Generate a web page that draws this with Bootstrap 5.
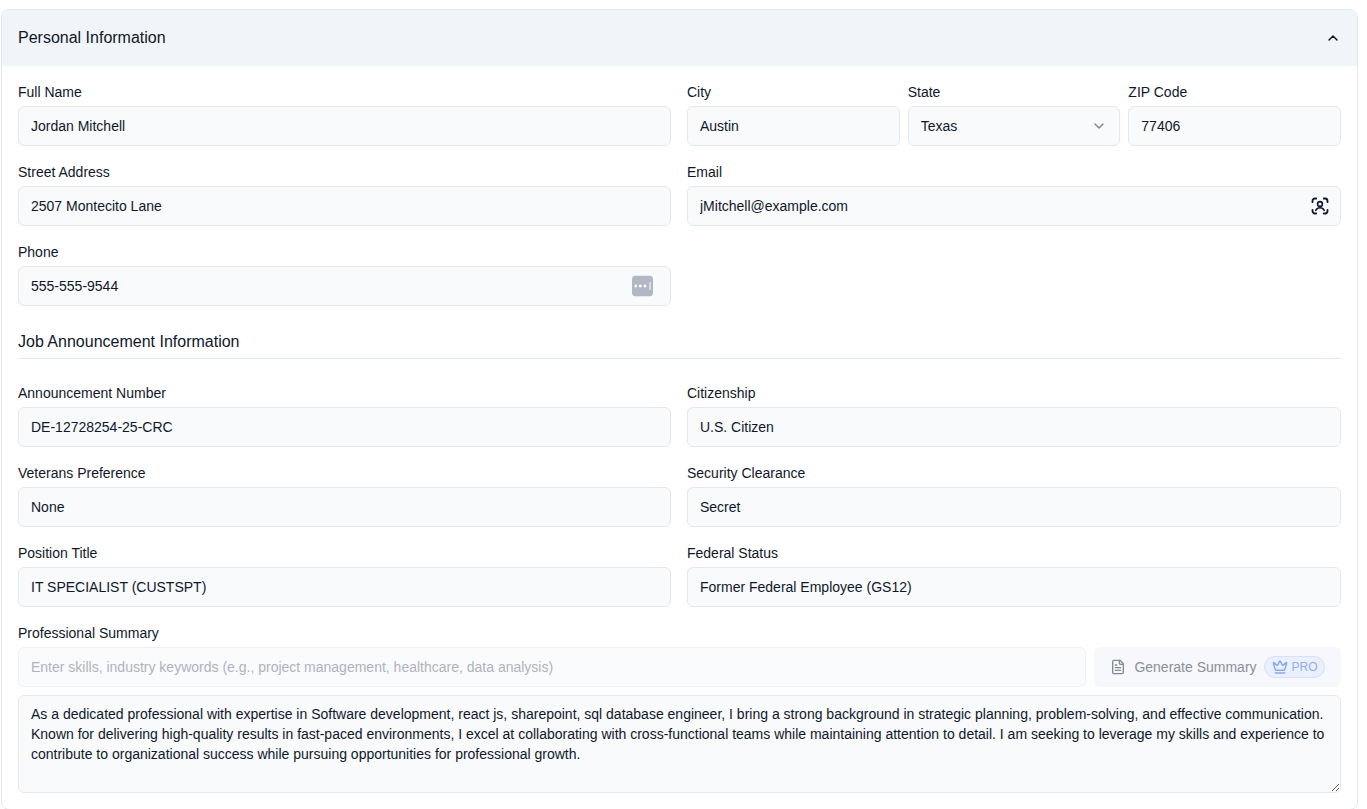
<!DOCTYPE html>
<html lang="en">
<head>
<meta charset="utf-8">
<title>Personal Information</title>
<link href="https://cdn.jsdelivr.net/npm/bootstrap@5.3.0/dist/css/bootstrap.min.css" rel="stylesheet">
<style>
html, body { height: 100%; overflow: hidden; }
body { font-family: "Liberation Sans", Arial, sans-serif; font-size: 14px; color: #0f172a; background: #fff; }
.page-wrap { padding: 9px 9px 0 1px; }
.info-card { border: 1px solid #e2e8f0; border-radius: 8px; background: #fff; }
.info-head { height: 56px; padding: 0 16px; background: #f1f5f9; border: 0; border-radius: 7px 7px 0 0; font-size: 16px; line-height: 24px; }
.info-head svg { width: 16px; height: 16px; }
.info-body { padding: 16px; }
.grid-main { display: grid; grid-template-columns: 653px 1fr; column-gap: 16px; row-gap: 16px; }
.grid-addr { display: grid; grid-template-columns: 1fr 1fr 1fr; column-gap: 8px; }
.fld-label { display: block; font-size: 14px; line-height: 20px; margin-bottom: 4px; color: #0f172a; }
.fld-input { height: 40px; padding: 8px 12px; font-size: 14px; line-height: 20px; color: #0f172a; background-color: #f8fafc; border: 1px solid #e2e8f0; border-radius: 6px; }
.fld-input::placeholder { color: #78808e; opacity: 1; }
.fld-wrap { position: relative; }
.fld-select { appearance: none; }
.fld-icon { position: absolute; top: 50%; transform: translateY(-50%); pointer-events: none; }
.chev-ico { right: 13px; width: 16px; height: 16px; }
.scan-ico { right: 11px; width: 20px; height: 20px; }
.dots-ico { right: 18px; width: 21px; height: 21px; }
.section-title { font-size: 16px; line-height: 24px; font-weight: 400; margin: 24px 0 24px; padding-bottom: 4px; border-bottom: 1px solid #e2e8f0; color: #0f172a; }
.muted-input { opacity: .6; background-color: #f8fafc; }
.muted-input.fld-input { border-color: #e2e8f0; }
.gen-btn { width: 247px; flex: 0 0 247px; height: 40px; padding: 0; gap: 8px; font-size: 14px; line-height: 20px; color: #8a8f99; background: #f6f8fb; border: 0; border-radius: 6px; }
.gen-btn:disabled { color: #8a8f99; background: #f6f8fb; opacity: 1; border: 0; }
.pro-pill { display: inline-flex; align-items: center; gap: 4px; height: 22px; margin-left: -1px; padding: 0 6px 0 7px; font-size: 12px; color: #93aef0; background: #eaf0fd; border: 1px solid #d5e1fa; border-radius: 11px; }
.fld-area { height: 98px; margin-top: 8px; resize: vertical; padding: 8px 12px; }
.fld-area.fld-input { height: 98px; }
</style>
</head>
<body>
<div class="page-wrap">
  <div class="card info-card">
    <div class="card-header info-head d-flex align-items-center justify-content-between">
      <span>Personal Information</span>
      <svg viewBox="0 0 24 24" fill="none" stroke="#0f172a" stroke-width="2.2" stroke-linecap="round" stroke-linejoin="round"><path d="m18 15-6-6-6 6"/></svg>
    </div>
    <div class="card-body info-body">
      <div class="grid-main">
        <div>
          <label class="fld-label" for="f1">Full Name</label>
          <input class="form-control fld-input" id="f1" value="Jordan Mitchell">
        </div>
        <div class="grid-addr">
          <div>
            <label class="fld-label" for="f2">City</label>
            <input class="form-control fld-input" id="f2" value="Austin">
          </div>
          <div>
            <label class="fld-label" for="f3">State</label>
            <div class="fld-wrap">
              <select class="form-control fld-input fld-select" id="f3"><option>Texas</option></select>
              <svg class="fld-icon chev-ico" viewBox="0 0 24 24" fill="none" stroke="#7b828e" stroke-width="2" stroke-linecap="round" stroke-linejoin="round"><path d="m6 9 6 6 6-6"/></svg>
            </div>
          </div>
          <div>
            <label class="fld-label" for="f4">ZIP Code</label>
            <input class="form-control fld-input" id="f4" value="77406">
          </div>
        </div>
        <div>
          <label class="fld-label" for="f5">Street Address</label>
          <input class="form-control fld-input" id="f5" value="2507 Montecito Lane">
        </div>
        <div>
          <label class="fld-label" for="f6">Email</label>
          <div class="fld-wrap">
            <input class="form-control fld-input" id="f6" value="jMitchell@example.com">
            <svg class="fld-icon scan-ico" viewBox="0 0 20 20" fill="none" stroke="#0f172a" stroke-width="1.800" stroke-linecap="round" stroke-linejoin="round"><path d="M2.500 6.200V5a2.500 2.500 0 0 1 2.500-2.500h1.200"/><path d="M13.800 2.500H15A2.500 2.500 0 0 1 17.500 5v1.200"/><path d="M17.500 13.800V15a2.500 2.500 0 0 1-2.500 2.500h-1.200"/><path d="M6.200 17.500H5A2.500 2.500 0 0 1 2.500 15v-1.200"/><circle cx="10" cy="8" r="2.400" stroke-width="1.600"/><path d="M5.800 14.400c.8-1.700 2.300-2.600 4.200-2.600s3.400.9 4.200 2.600" stroke-width="1.600"/></svg>
          </div>
        </div>
        <div>
          <label class="fld-label" for="f7">Phone</label>
          <div class="fld-wrap">
            <input class="form-control fld-input" id="f7" value="555-555-9544">
            <svg class="fld-icon dots-ico" viewBox="0 0 21 21"><rect width="21" height="21" rx="4" fill="#b1b8c4"/><circle cx="3.700" cy="10.500" r="1.400" fill="#fff"/><circle cx="8.300" cy="10.500" r="1.400" fill="#fff"/><circle cx="13" cy="10.500" r="1.400" fill="#fff"/><rect x="17.500" y="6.500" width="1" height="8" fill="#fff"/></svg>
          </div>
        </div>
      </div>
      <h2 class="section-title">Job Announcement Information</h2>
      <div class="grid-main">
        <div>
          <label class="fld-label" for="j1">Announcement Number</label>
          <input class="form-control fld-input" id="j1" value="DE-12728254-25-CRC">
        </div>
        <div>
          <label class="fld-label" for="j2">Citizenship</label>
          <input class="form-control fld-input" id="j2" value="U.S. Citizen">
        </div>
        <div>
          <label class="fld-label" for="j3">Veterans Preference</label>
          <input class="form-control fld-input" id="j3" value="None">
        </div>
        <div>
          <label class="fld-label" for="j4">Security Clearance</label>
          <input class="form-control fld-input" id="j4" value="Secret">
        </div>
        <div>
          <label class="fld-label" for="j5">Position Title</label>
          <input class="form-control fld-input" id="j5" value="IT SPECIALIST (CUSTSPT)">
        </div>
        <div>
          <label class="fld-label" for="j6">Federal Status</label>
          <input class="form-control fld-input" id="j6" value="Former Federal Employee (GS12)">
        </div>
      </div>
      <div class="mt-3">
        <label class="fld-label" for="s1">Professional Summary</label>
        <div class="d-flex gap-2">
          <input class="form-control fld-input muted-input" id="s1" placeholder="Enter skills, industry keywords (e.g., project management, healthcare, data analysis)">
          <button type="button" class="btn gen-btn d-inline-flex align-items-center justify-content-center" disabled>
            <svg width="16" height="16" viewBox="0 0 24 24" fill="none" stroke="#838893" stroke-width="2" stroke-linecap="round" stroke-linejoin="round"><path d="M15 2H6a2 2 0 0 0-2 2v16a2 2 0 0 0 2 2h12a2 2 0 0 0 2-2V7Z"/><path d="M14 2v4a2 2 0 0 0 2 2h4"/><path d="M10 9H8"/><path d="M16 13H8"/><path d="M16 17H8"/></svg>
            <span>Generate Summary</span>
            <span class="pro-pill"><svg width="16" height="16" viewBox="0 0 24 24" fill="none" stroke="#8aa7ee" stroke-width="2.200" stroke-linecap="round" stroke-linejoin="round"><path d="M11.562 3.266a.5.5 0 0 1 .876 0L15.39 8.87a1 1 0 0 0 1.516.294L21.183 5.500a.5.5 0 0 1 .798.519l-2.834 10.246a1 1 0 0 1-.956.734H5.810a1 1 0 0 1-.957-.734L2.020 6.020a.5.5 0 0 1 .798-.519l4.276 3.664a1 1 0 0 0 1.516-.294z"/><path d="M5 21h14"/></svg>PRO</span>
          </button>
        </div>
        <textarea class="form-control fld-input fld-area" id="s2">As a dedicated professional with expertise in Software development, react js, sharepoint, sql database engineer, I bring a strong background in strategic planning, problem-solving, and effective communication. Known for delivering high-quality results in fast-paced environments, I excel at collaborating with cross-functional teams while maintaining attention to detail. I am seeking to leverage my skills and experience to contribute to organizational success while pursuing opportunities for professional growth.</textarea>
      </div>
    </div>
  </div>
</div>
<script src="https://cdn.jsdelivr.net/npm/bootstrap@5.3.0/dist/js/bootstrap.bundle.min.js"></script>
</body>
</html>
